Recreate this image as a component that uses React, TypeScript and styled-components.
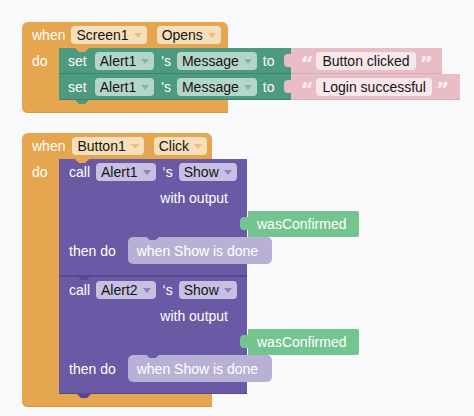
import styled, { createGlobalStyle } from "styled-components";

const ORANGE = "#e6a64f";
const ORANGE_FIELD = "#f6dfba";
const ORANGE_ARROW = "#efbe76";
const TEAL = "#4c9a7f";
const TEAL_DARK = "#3f8469";
const TEAL_FIELD = "#b3d6c8";
const TEAL_ARROW = "#80b8a4";
const PINK = "#e8bdc5";
const PINK_DARK = "#dcaab3";
const PINK_FIELD = "#f7e7ea";
const PURPLE = "#6a5aa5";
const PURPLE_DARK = "#58498f";
const PURPLE_FIELD = "#c8c0e2";
const PURPLE_ARROW = "#8d81bf";
const MINT = "#73c48f";
const LILAC = "#b9b1d5";

const GlobalStyle = createGlobalStyle`
  html, body {
    margin: 0;
    background: #f9f9fb;
  }
  body {
    font-family: "Liberation Sans", Arial, sans-serif;
    font-size: 14px;
    -webkit-font-smoothing: antialiased;
  }
`;

const Workspace = styled.div`
  display: flex;
  flex-direction: column;
  align-items: flex-start;
  gap: 20px;
  padding: 22px 0 0 22px;
  width: 474px;
  height: 416px;
  box-sizing: border-box;
  overflow: hidden;
`;

/* ---------- event ("when ... do") block ---------- */

const Event = styled.div`
  display: flex;
  flex-direction: column;
  align-items: flex-start;
`;

const EventHead = styled.div<{ $w: number }>`
  position: relative;
  display: flex;
  align-items: center;
  width: ${(p) => p.$w}px;
  height: 26px;
  padding-left: 10px;
  box-sizing: border-box;
  background: ${ORANGE};
  border-radius: 6px 6px 0 0;

  &::after {
    content: "";
    position: absolute;
    left: 53px;
    bottom: -4px;
    width: 14px;
    height: 4px;
    background: ${ORANGE};
    clip-path: polygon(0 0, 100% 0, 72% 100%, 28% 100%);
    z-index: 2;
  }
`;

const EventBody = styled.div`
  display: flex;
  align-items: stretch;
`;

const DoColumn = styled.div`
  width: 37px;
  background: ${ORANGE};
  padding-left: 10px;
  box-sizing: border-box;
`;

const Stack = styled.div`
  display: flex;
  flex-direction: column;
  align-items: flex-start;
`;

const EventFoot = styled.div<{ $w: number }>`
  width: ${(p) => p.$w}px;
  height: 13px;
  background: ${ORANGE};
  border-radius: 0 0 0 6px;
  box-shadow: inset 0 -1px 0 #d8963f;
`;

const Label = styled.span<{ $gap?: number }>`
  color: #fff;
  line-height: 26px;
  white-space: nowrap;
  margin-left: ${(p) => p.$gap ?? 0}px;
`;

/* ---------- dropdown field ---------- */

const Dropdown = styled.span<{ $fill: string; $arrow: string; $gap?: number }>`
  display: inline-flex;
  align-items: center;
  height: 18px;
  padding: 0 5px 0 5px;
  margin-left: ${(p) => p.$gap ?? 0}px;
  border-radius: 4px;
  background: ${(p) => p.$fill};
  color: #141414;
  white-space: nowrap;

  &::after {
    content: "";
    margin-left: 5px;
    border-left: 4.5px solid transparent;
    border-right: 4.5px solid transparent;
    border-top: 5px solid ${(p) => p.$arrow};
  }
`;

/* ---------- set block + text block ---------- */

const StatementRow = styled.div`
  display: flex;
  align-items: stretch;
  height: 26px;
`;

const SetBlock = styled.div`
  position: relative;
  display: flex;
  align-items: center;
  padding: 0 17px 0 9px;
  background: ${TEAL};
  box-shadow: inset 0 -1px 0 ${TEAL_DARK};

  &::after {
    content: "";
    position: absolute;
    left: 16px;
    bottom: -4px;
    width: 14px;
    height: 4px;
    background: ${TEAL};
    clip-path: polygon(0 0, 100% 0, 72% 100%, 28% 100%);
    z-index: 1;
  }
`;

const TextBlock = styled.div<{ $w: number }>`
  position: relative;
  display: flex;
  align-items: center;
  width: ${(p) => p.$w}px;
  padding-left: 9px;
  box-sizing: border-box;
  background: ${PINK};
  box-shadow: inset 0 -1px 0 ${PINK_DARK};

  &::before {
    content: "";
    position: absolute;
    left: -7px;
    top: 6px;
    width: 8px;
    height: 13px;
    background: ${PINK};
    border-radius: 4px 0 0 4px;
  }
`;

const Quote = styled.span`
  align-self: flex-start;
  display: block;
  width: 13px;
  height: 16px;
  margin-top: 5px;
  color: #fbf0f2;
  font-family: "DejaVu Sans", sans-serif;
  font-weight: bold;
  font-size: 20px;
  line-height: 20px;
`;

const TextField = styled.span`
  display: inline-flex;
  align-items: center;
  height: 18px;
  margin: 0 4px 0 3px;
  padding: 0 6px;
  border-radius: 4px;
  background: ${PINK_FIELD};
  color: #141414;
  white-space: nowrap;
`;

/* ---------- call block ---------- */

const CallBlock = styled.div<{ $first?: boolean }>`
  position: relative;
  display: flex;
  flex-direction: column;
  width: 188px;
  padding-bottom: 12px;
  background: ${PURPLE};
  border-top: ${(p) => (p.$first ? "none" : `1px solid ${PURPLE_DARK}`)};
  box-shadow: inset 0 -1px 0 ${PURPLE_DARK};

  &::after {
    content: "";
    position: absolute;
    left: 18px;
    bottom: -4px;
    width: 14px;
    height: 4px;
    background: ${PURPLE_DARK};
    clip-path: polygon(0 0, 100% 0, 72% 100%, 28% 100%);
    z-index: 1;
  }
`;

const CallRow = styled.div`
  display: flex;
  align-items: center;
  height: 26px;
  padding-left: 10px;
`;

const OutputRow = styled.div`
  display: flex;
  justify-content: flex-end;
  align-items: center;
  height: 26px;
  padding-right: 19px;
`;

const ValueRow = styled.div`
  display: flex;
  height: 26px;
  padding-left: 189px;
`;

const ValueBlock = styled.div`
  position: relative;
  flex-shrink: 0;
  display: flex;
  align-items: center;
  width: 111px;
  padding-left: 9px;
  box-sizing: border-box;
  background: ${MINT};
  color: #fff;
  border-radius: 0 2px 2px 0;

  &::before {
    content: "";
    position: absolute;
    left: -8px;
    top: 6px;
    width: 9px;
    height: 13px;
    background: ${MINT};
    border-radius: 4px 0 0 4px;
  }
`;

const ThenRow = styled.div`
  display: flex;
  align-items: center;
  height: 27px;
  padding-left: 10px;
`;

const CallbackBlock = styled.div`
  position: relative;
  flex-shrink: 0;
  display: flex;
  align-items: center;
  width: 144px;
  height: 27px;
  margin-left: 12px;
  padding-left: 9px;
  box-sizing: border-box;
  background: ${LILAC};
  color: #fff;
  border-radius: 5px;
  white-space: nowrap;

  &::before {
    content: "";
    position: absolute;
    left: 18px;
    top: -1px;
    width: 14px;
    height: 4px;
    background: ${PURPLE};
    clip-path: polygon(0 0, 100% 0, 72% 100%, 28% 100%);
  }
`;

const setters = [
  { text: "Button clicked", w: 151 },
  { text: "Login successful", w: 169 },
];

const calls = ["Alert1", "Alert2"];

export default function App() {
  return (
    <>
      <GlobalStyle />
      <Workspace>
        <Event>
          <EventHead $w={206}>
            <Label>when</Label>
            <Dropdown $fill={ORANGE_FIELD} $arrow={ORANGE_ARROW} $gap={6}>
              Screen1
            </Dropdown>
            <Dropdown $fill={ORANGE_FIELD} $arrow={ORANGE_ARROW} $gap={10}>
              Opens
            </Dropdown>
          </EventHead>
          <EventBody>
            <DoColumn>
              <Label>do</Label>
            </DoColumn>
            <Stack>
              {setters.map((s) => (
                <StatementRow key={s.text}>
                  <SetBlock>
                    <Label>set</Label>
                    <Dropdown $fill={TEAL_FIELD} $arrow={TEAL_ARROW} $gap={8}>
                      Alert1
                    </Dropdown>
                    <Label $gap={7}>'s</Label>
                    <Dropdown $fill={TEAL_FIELD} $arrow={TEAL_ARROW} $gap={6}>
                      Message
                    </Dropdown>
                    <Label $gap={6}>to</Label>
                  </SetBlock>
                  <TextBlock $w={s.w}>
                    <Quote>“</Quote>
                    <TextField>{s.text}</TextField>
                    <Quote>”</Quote>
                  </TextBlock>
                </StatementRow>
              ))}
            </Stack>
          </EventBody>
          <EventFoot $w={206} />
        </Event>

        <Event>
          <EventHead $w={190}>
            <Label>when</Label>
            <Dropdown $fill={ORANGE_FIELD} $arrow={ORANGE_ARROW} $gap={7}>
              Button1
            </Dropdown>
            <Dropdown $fill={ORANGE_FIELD} $arrow={ORANGE_ARROW} $gap={10}>
              Click
            </Dropdown>
          </EventHead>
          <EventBody>
            <DoColumn>
              <Label>do</Label>
            </DoColumn>
            <Stack>
              {calls.map((name, i) => (
                <CallBlock key={name} $first={i === 0}>
                  <CallRow>
                    <Label>call</Label>
                    <Dropdown $fill={PURPLE_FIELD} $arrow={PURPLE_ARROW} $gap={6}>
                      {name}
                    </Dropdown>
                    <Label $gap={7}>‘s</Label>
                    <Dropdown $fill={PURPLE_FIELD} $arrow={PURPLE_ARROW} $gap={6}>
                      Show
                    </Dropdown>
                  </CallRow>
                  <OutputRow>
                    <Label>with output</Label>
                  </OutputRow>
                  <ValueRow>
                    <ValueBlock>wasConfirmed</ValueBlock>
                  </ValueRow>
                  <ThenRow>
                    <Label>then do</Label>
                    <CallbackBlock>when Show is done</CallbackBlock>
                  </ThenRow>
                </CallBlock>
              ))}
            </Stack>
          </EventBody>
          <EventFoot $w={190} />
        </Event>
      </Workspace>
    </>
  );
}
